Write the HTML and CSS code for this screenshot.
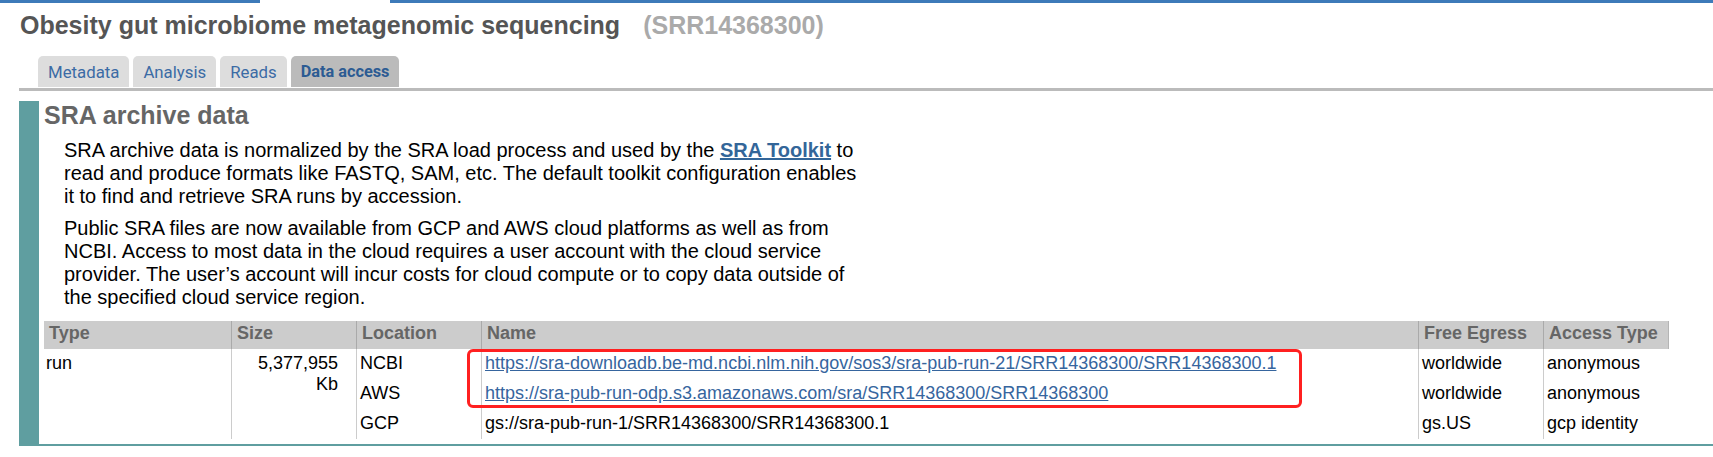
FILE: index.html
```html
<!DOCTYPE html>
<html>
<head>
<meta charset="utf-8">
<title>SRR14368300</title>
<link rel="stylesheet" href="styles.css">
</head>
<body>
<div class="topbar"><div class="seg seg-a"></div><div class="seg seg-b"></div></div>
<h1 class="title">Obesity gut microbiome metagenomic sequencing<span class="acc">(SRR14368300)</span></h1>
<div class="tabbar">
  <a class="tab">Metadata</a>
  <a class="tab">Analysis</a>
  <a class="tab">Reads</a>
  <a class="tab active">Data access</a>
</div>
<div class="section">
  <h2 class="heading">SRA archive data</h2>
  <div class="intro">
    <p>SRA archive data is normalized by the SRA load process and used by the <a class="toolkit">SRA Toolkit</a> to read and produce formats like FASTQ, SAM, etc. The default toolkit configuration enables it to find and retrieve SRA runs by accession.</p>
    <p>Public SRA files are now available from GCP and AWS cloud platforms as well as from NCBI. Access to most data in the cloud requires a user account with the cloud service provider. The user’s account will incur costs for cloud compute or to copy data outside of the specified cloud service region.</p>
  </div>
  <table class="files">
    <colgroup>
      <col class="c-type"><col class="c-size"><col class="c-loc"><col class="c-name"><col class="c-egress"><col class="c-access">
    </colgroup>
    <thead>
      <tr><th>Type</th><th>Size</th><th>Location</th><th>Name</th><th>Free Egress</th><th class="last">Access Type</th></tr>
    </thead>
    <tbody>
      <tr>
        <td rowspan="3" class="first">run</td>
        <td rowspan="3" class="size">5,377,955 Kb</td>
        <td>NCBI</td>
        <td><a class="link">https://sra-downloadb.be-md.ncbi.nlm.nih.gov/sos3/sra-pub-run-21/SRR14368300/SRR14368300.1</a></td>
        <td>worldwide</td>
        <td>anonymous</td>
      </tr>
      <tr>
        <td>AWS</td>
        <td><a class="link">https://sra-pub-run-odp.s3.amazonaws.com/sra/SRR14368300/SRR14368300</a></td>
        <td>worldwide</td>
        <td>anonymous</td>
      </tr>
      <tr>
        <td>GCP</td>
        <td>gs://sra-pub-run-1/SRR14368300/SRR14368300.1</td>
        <td>gs.US</td>
        <td>gcp identity</td>
      </tr>
    </tbody>
  </table>
</div>
<div class="annot"></div>
</body>
</html>
```

FILE: styles.css
```css
html, body {
  margin: 0;
  padding: 0;
  background: #fff;
}
body {
  font-family: "Liberation Sans", Arial, sans-serif;
  color: #000;
  position: relative;
}
.topbar {
  display: flex;
  height: 3px;
}
.seg {
  background: #3d7ab9;
}
.seg-a {
  width: 260px;
}
.seg-b {
  flex: 1;
  margin-left: 130px;
}
.title {
  margin: 8px 0 0 20px;
  font-size: 25px;
  line-height: 28px;
  font-weight: bold;
  color: #555;
}
.acc {
  color: #aaa;
  margin-left: 23px;
}
.tabbar {
  display: flex;
  gap: 4px;
  margin: 17px 0 0 19px;
  padding: 0 0 1px 19px;
  border-bottom: 3px solid #bbb;
}
.tab {
  display: flex;
  align-items: center;
  height: 31px;
  padding: 0 10px;
  background: #ddd;
  border-radius: 5px 5px 0 0;
  font-family: Roboto, "Liberation Sans", sans-serif;
  font-size: 16.8px;
  color: #3b6ba5;
  box-sizing: border-box;
}
.tab.active {
  background: #bbb;
  font-weight: bold;
  font-size: 16.3px;
  color: #2c5b93;
}
.section {
  margin: 10px 0 0 19px;
  border-left: 20px solid #5f9ea0;
  border-bottom: 2px solid #5f9ea0;
  padding: 0 0 5px 5px;
}
.heading {
  margin: 1px 0 0;
  font-size: 25px;
  line-height: 28px;
  font-weight: bold;
  color: #666;
}
.intro {
  margin-top: 10px;
  padding-left: 20px;
  width: 798px;
}
.intro p {
  margin: 0 0 9px;
  font-size: 20px;
  line-height: 23px;
}
.intro p:last-child {
  margin-bottom: 0;
}
.toolkit {
  font-weight: bold;
  color: #336699;
  text-decoration: underline;
}
.files {
  margin-top: 12px;
  border-collapse: separate;
  border-spacing: 0;
  table-layout: fixed;
  width: 1625px;
  font-size: 18px;
}
.c-type { width: 187px; }
.c-size { width: 125px; }
.c-loc { width: 125px; }
.c-name { width: 937px; }
.c-egress { width: 125px; }
.c-access { width: 126px; }
.files th {
  background: #ccc;
  color: #666;
  font-weight: bold;
  text-align: left;
  padding: 2px 5px 6px;
  line-height: 20px;
  border-left: 1px solid #aaa;
}
.files th:first-child {
  border-left: 0;
}
.files th.last {
  border-right: 1px solid #b5b5b5;
}
.files td {
  padding: 4px 3px 5px;
  line-height: 21px;
  vertical-align: top;
  border-left: 1px solid #ccc;
  color: #000;
}
.files td.first {
  border-left: 0;
  padding-left: 2px;
}
.files td.size {
  text-align: right;
  padding-right: 18px;
}
.link {
  color: #36659e;
  text-decoration: underline;
}
.annot {
  position: absolute;
  left: 467px;
  top: 349px;
  width: 835px;
  height: 59px;
  box-sizing: border-box;
  border: 3px solid #ff2020;
  border-radius: 6px;
}
```
